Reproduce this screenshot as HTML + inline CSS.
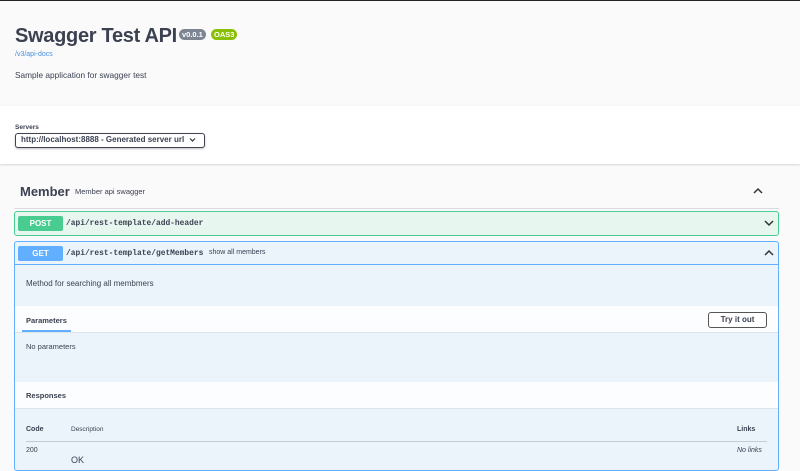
<!DOCTYPE html>
<html><head><meta charset="utf-8"><style>
*{margin:0;padding:0;box-sizing:border-box}
body{width:800px;height:463px;overflow:hidden;background:#fafafa;font-family:"Liberation Sans",sans-serif;color:#3b4151;position:relative}
.abs{position:absolute;white-space:nowrap}
.top{left:0;top:0;width:800px;height:1px;background:#222}
.hdr{left:0;top:1px;width:800px;height:105px;background:#fafafa}
.title{left:15px;top:25px;font-size:20px;font-weight:bold;color:#3b4151;letter-spacing:-0.3px}
.badge{top:29px;height:11px;border-radius:6px;font-size:7.5px;font-weight:bold;color:#fff;line-height:11px;padding:0 3px}
.srv{left:0;top:106px;width:800px;height:58px;background:#fff;box-shadow:0 1px 2px rgba(0,0,0,.15)}
.sel{left:15px;top:133px;width:190px;height:15px;border:1.5px solid #41444e;border-radius:3px;box-shadow:0 1px 2px rgba(0,0,0,.25);font-size:8px;font-weight:bold;line-height:12px;padding-left:5px;color:#3b4151;background:#fff}
.mono{font-family:"Liberation Mono",monospace;font-weight:bold;font-size:7.9px;color:#3b4151}
.meth{width:45px;height:15px;border-radius:2px;color:#fff;font-size:8px;font-weight:bold;text-align:center;line-height:15px}
</style></head><body>
<div class="abs top"></div>
<div class="abs hdr"></div>
<div class="abs title">Swagger Test API</div>
<div class="abs badge" style="left:179px;background:#7d8492">v0.0.1</div>
<div class="abs badge" style="left:211px;background:#89bf04">OAS3</div>
<div class="abs" style="left:15px;top:51px;font-size:7px;color:#4990e2">/v3/api-docs</div>
<div class="abs" style="left:15px;top:70px;font-size:8.3px">Sample application for swagger test</div>
<div class="abs srv"></div>
<div class="abs" style="left:15px;top:124px;font-size:6.5px;font-weight:bold">Servers</div>
<div class="abs sel">http://localhost:8888 - Generated server url<svg style="position:absolute;right:8px;top:3px" width="7" height="6"><path d="M1 1.5 L3.5 4 L6 1.5" stroke="#333" stroke-width="1.2" fill="none"/></svg></div>

<div class="abs" style="left:20px;top:184px;font-size:13px;font-weight:bold">Member</div>
<div class="abs" style="left:75px;top:187px;font-size:7.5px">Member api swagger</div>
<svg class="abs" style="left:752px;top:186px" width="12" height="10"><path d="M2 7 L6 3 L10 7" stroke="#333" stroke-width="1.5" fill="none"/></svg>
<div class="abs" style="left:14px;top:208px;width:765px;height:1px;background:#d9dbde"></div>

<div class="abs" style="left:14px;top:211px;width:765px;height:25px;background:#e8f6f0;border:1px solid #49cc90;border-radius:3px"></div>
<div class="abs meth" style="left:18px;top:216px;background:#49cc90">POST</div>
<div class="abs mono" style="left:66px;top:219px">/api/rest-template/add-header</div>
<svg class="abs" style="left:763px;top:218px" width="12" height="10"><path d="M2 3 L6 7 L10 3" stroke="#333" stroke-width="1.5" fill="none"/></svg>

<div class="abs" style="left:14px;top:241px;width:765px;height:230px;background:#ebf3fb;border:1px solid #61affe;border-radius:3px"></div>
<div class="abs" style="left:15px;top:264px;width:763px;height:1px;background:#61affe"></div>
<div class="abs meth" style="left:18px;top:246px;background:#61affe">GET</div>
<div class="abs mono" style="left:66px;top:249px">/api/rest-template/getMembers</div>
<div class="abs" style="left:209px;top:249px;font-size:7px">show all members</div>
<svg class="abs" style="left:763px;top:248px" width="12" height="10"><path d="M2 7 L6 3 L10 7" stroke="#333" stroke-width="1.5" fill="none"/></svg>
<div class="abs" style="left:26px;top:279px;font-size:8px">Method for searching all membmers</div>

<div class="abs" style="left:15px;top:306px;width:763px;height:27px;background:#fcfdfe;border-bottom:1px solid #dde3ea"></div>
<div class="abs" style="left:26px;top:316px;font-size:7.5px;font-weight:bold">Parameters</div>
<div class="abs" style="left:22px;top:330px;width:49px;height:2px;background:#61affe"></div>
<div class="abs" style="left:708px;top:312px;width:59px;height:16px;border:1.5px solid #555;border-radius:3px;background:#fff;font-size:8px;font-weight:bold;text-align:center;line-height:13px">Try it out</div>
<div class="abs" style="left:26px;top:342px;font-size:7.5px">No parameters</div>

<div class="abs" style="left:15px;top:382px;width:763px;height:27px;background:#fcfdfe;border-bottom:1px solid #dde3ea"></div>
<div class="abs" style="left:26px;top:391px;font-size:7.5px;font-weight:bold">Responses</div>
<div class="abs" style="left:26px;top:426px;font-size:7px;font-weight:bold">Code</div>
<div class="abs" style="left:71px;top:426px;font-size:6.5px">Description</div>
<div class="abs" style="left:737px;top:426px;font-size:7px;font-weight:bold">Links</div>
<div class="abs" style="left:26px;top:441px;width:741px;height:1px;background:#c6cbd2"></div>
<div class="abs" style="left:26px;top:447px;font-size:7px">200</div>
<div class="abs" style="left:71px;top:455px;font-size:9px">OK</div>
<div class="abs" style="left:737px;top:447px;font-size:7px;font-style:italic">No links</div>
</body></html>
